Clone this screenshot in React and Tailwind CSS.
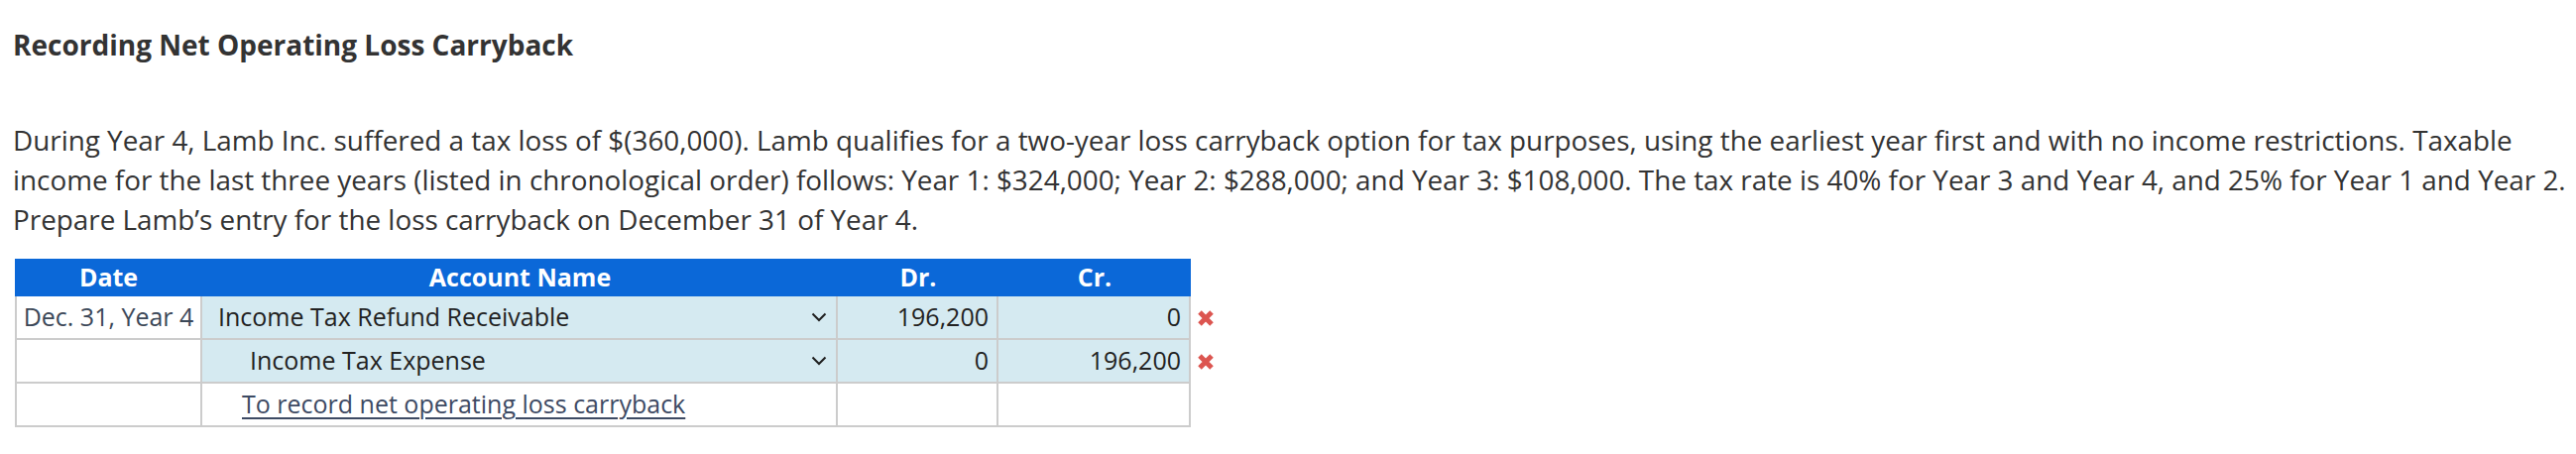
import React from "react";

const rows = [
    {
        date: "Dec. 31, Year 4",
        account: "Income Tax Refund Receivable",
        indent: false,
        dr: "196,200",
        cr: "0",
        wrong: true,
    },
    {
        date: "",
        account: "Income Tax Expense",
        indent: true,
        dr: "0",
        cr: "196,200",
        wrong: true,
    },
];

function Chevron() {
    return (
        <svg width="16" height="10" viewBox="0 0 16 10" className="shrink-0">
            <polyline
                points="1.5,1.5 8,8 14.5,1.5"
                fill="none"
                stroke="#1f1f1f"
                strokeWidth="2"
            />
        </svg>
    );
}

function RedX() {
    return (
        <svg width="18" height="18" viewBox="0 0 18 18" className="ml-[6px] shrink-0">
            <path
                d="M3 3 L15 15 M15 3 L3 15"
                stroke="#dc5550"
                strokeWidth="5"
                strokeLinecap="butt"
            />
        </svg>
    );
}

function App() {
    return (
        <div
            className="w-full bg-white pr-[4px] pl-[13px] pb-[20px] text-[#333333]"
            style={{ fontFamily: '"Open Sans", "Liberation Sans", sans-serif' }}
        >
            <p className="pt-[26px] text-[28px] leading-[38px] font-bold text-[#333333]">
                Recording Net Operating Loss Carryback
            </p>
            <p className="mt-[57px] text-[27.85px] leading-[40px]">
                During Year 4, Lamb Inc. suffered a tax loss of $(360,000). Lamb qualifies for a two-year loss
                carryback option for tax purposes, using the earliest year first and with no income restrictions.
                Taxable income for the last three years (listed in chronological order) follows: Year 1: $324,000;
                Year 2: $288,000; and Year 3: $108,000. The tax rate is 40% for Year 3 and Year 4, and 25% for Year 1
                and Year 2. Prepare Lamb’s entry for the loss carryback on December 31 of Year 4.
            </p>

            <div className="mt-[20px] ml-[2px]">
                <div className="grid h-[38px] w-[1186px] grid-cols-[189px_641px_162px_194px] items-center bg-[#0b68d8] text-center text-[25px] font-bold text-white">
                    <div>Date</div>
                    <div>Account Name</div>
                    <div>Dr.</div>
                    <div>Cr.</div>
                </div>

                {rows.map((row, i) => (
                    <div key={i} className="flex items-center">
                        <div className="grid h-[44px] w-[1186px] grid-cols-[189px_641px_162px_194px] border-b-2 border-[#cccccc] text-[25px]">
                            <div className="flex items-center justify-center border-r-2 border-l-2 border-[#cccccc] text-[#3c4858]">
                                {row.date}
                            </div>
                            <div
                                className={
                                    row.indent
                                        ? "flex items-center justify-between border-r-2 border-[#cccccc] bg-[#d5eaf1] pr-[9px] pl-[48px] text-[#222222]"
                                        : "flex items-center justify-between border-r-2 border-[#cccccc] bg-[#d5eaf1] pr-[9px] pl-[16px] text-[#222222]"
                                }
                            >
                                <span>{row.account}</span>
                                <Chevron />
                            </div>
                            <div className="flex items-center justify-end border-r-2 border-[#cccccc] bg-[#d5eaf1] pr-[8px] text-[#222222]">
                                {row.dr}
                            </div>
                            <div className="flex items-center justify-end border-r-2 border-[#cccccc] bg-[#d5eaf1] pr-[8px] text-[#222222]">
                                {row.cr}
                            </div>
                        </div>
                        {row.wrong && <RedX />}
                    </div>
                ))}

                <div className="grid h-[44px] w-[1186px] grid-cols-[189px_641px_162px_194px] border-b-2 border-[#cccccc] text-[25px]">
                    <div className="border-r-2 border-l-2 border-[#cccccc]"></div>
                    <div className="flex items-center border-r-2 border-[#cccccc] pl-[40px]">
                        <span className="text-[#3d4a63] underline decoration-[2px] underline-offset-[4px]">
                            To record net operating loss carryback
                        </span>
                    </div>
                    <div className="border-r-2 border-[#cccccc]"></div>
                    <div className="border-r-2 border-[#cccccc]"></div>
                </div>
            </div>
        </div>
    );
}

export default App;
